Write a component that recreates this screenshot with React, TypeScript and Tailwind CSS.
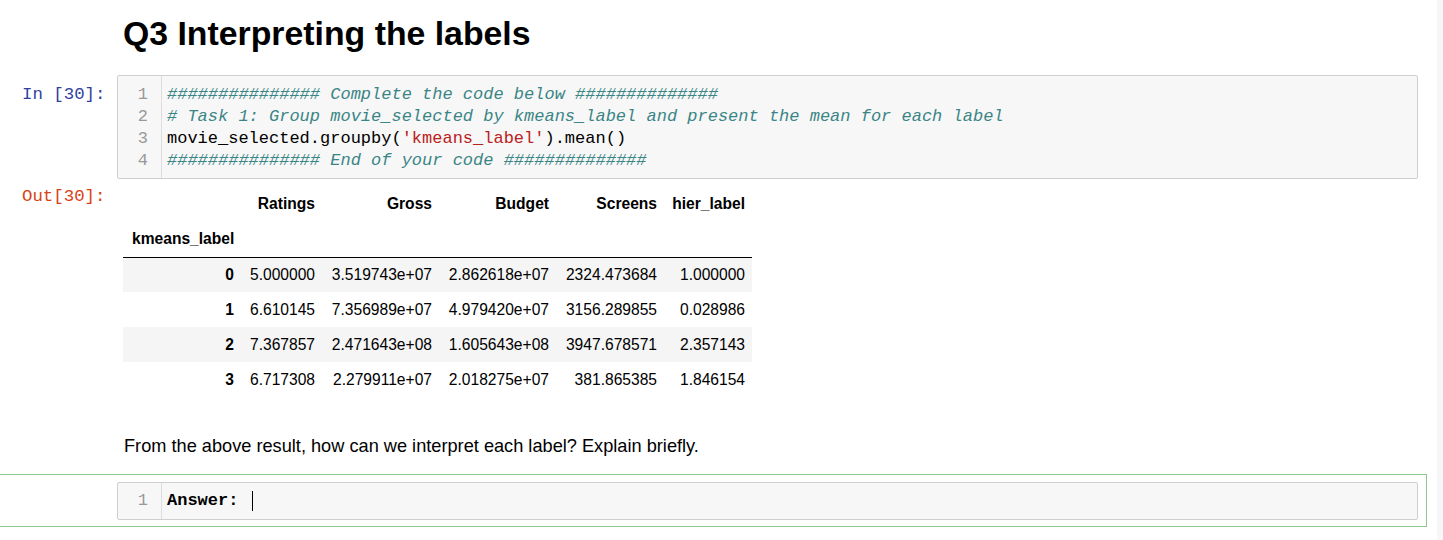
const mono = { fontFamily: '"Liberation Mono", "DejaVu Sans Mono", monospace' }

const rows = [
  { idx: '0', vals: ['5.000000', '3.519743e+07', '2.862618e+07', '2324.473684', '1.000000'] },
  { idx: '1', vals: ['6.610145', '7.356989e+07', '4.979420e+07', '3156.289855', '0.028986'] },
  { idx: '2', vals: ['7.367857', '2.471643e+08', '1.605643e+08', '3947.678571', '2.357143'] },
  { idx: '3', vals: ['6.717308', '2.279911e+07', '2.018275e+07', '381.865385', '1.846154'] },
]

const cols = ['Ratings', 'Gross', 'Budget', 'Screens', 'hier_label']
const widths = ['w-[81px]', 'w-[117px]', 'w-[117px]', 'w-[108px]', 'w-[88px]']

function Hashes({ n }: { n: number }) {
  return <>{'#'.repeat(n)}</>
}

function CodeCell() {
  const lines = [
    <span className="italic text-[#3a8585]"><Hashes n={15} /> Complete the code below <Hashes n={14} /></span>,
    <span className="italic text-[#3a8585]"># Task 1: Group movie_selected by kmeans_label and present the mean for each label</span>,
    <span className="text-black">movie_selected.groupby(<span className="text-[#ba2121]">'kmeans_label'</span>).mean()</span>,
    <span className="italic text-[#3a8585]"><Hashes n={15} /> End of your code <Hashes n={14} /></span>,
  ]
  return (
    <div className="flex" style={mono}>
      <div className="w-[117px] shrink-0 pl-[22px] pt-[9px] text-[17.4px] leading-[22px] text-[#303f9f]">In [30]:</div>
      <div className="w-[1301px] flex border border-[#cfcfcf] bg-[#f7f7f7] rounded-[2px] text-[17px] leading-[22px]">
        <div className="w-[44px] shrink-0 border-r border-[#dddddd] pt-[8px] pb-[6px] pr-[13px] text-right text-[#999999]">
          {lines.map((_, i) => <div key={i}>{i + 1}</div>)}
        </div>
        <div className="pl-[5px] pt-[8px] pb-[6px] whitespace-pre">
          {lines.map((l, i) => <div key={i}>{l}</div>)}
        </div>
      </div>
    </div>
  )
}

function OutputCell() {
  return (
    <div className="flex mt-[7px]">
      <div className="w-[117px] shrink-0 pl-[22px] text-[17.4px] leading-[22px] text-[#d84315]" style={mono}>Out[30]:</div>
      <div className="pl-[6px] pt-[1px] text-[15.6px] text-black">
        <table className="border-collapse">
          <thead>
            <tr className="h-[34px]">
              <th className="w-[118px]"></th>
              {cols.map((c, i) => (
                <th key={c} className={`${widths[i]} pr-[7px] text-right font-bold align-middle`}>{c}</th>
              ))}
            </tr>
            <tr className="h-[36px] border-b border-black">
              <th className="pl-[9px] text-left font-bold align-middle">kmeans_label</th>
              {cols.map(c => <th key={c}></th>)}
            </tr>
          </thead>
          <tbody>
            {rows.map((r, i) => (
              <tr key={r.idx} className={`h-[35px] ${i % 2 === 0 ? 'bg-[#f5f5f5]' : 'bg-white'}`}>
                <th className="pr-[7px] text-right font-bold align-middle">{r.idx}</th>
                {r.vals.map((v, j) => (
                  <td key={j} className="pr-[7px] text-right align-middle whitespace-nowrap">{v}</td>
                ))}
              </tr>
            ))}
          </tbody>
        </table>
      </div>
    </div>
  )
}

function AnswerCell() {
  return (
    <div className="mt-[15px] w-[1427px] border-t border-b border-r border-[#8cc890] pt-[7px] pb-[6px] pr-[8px] flex">
      <div className="w-[117px] shrink-0"></div>
      <div className="flex-1 flex border border-[#cfcfcf] bg-[#f7f7f7] rounded-[2px] text-[17px] leading-[22px]" style={mono}>
        <div className="w-[44px] shrink-0 border-r border-[#dddddd] py-[7px] pr-[13px] text-right text-[#999999]">1</div>
        <div className="pl-[5px] py-[7px] whitespace-pre flex items-center">
          <span className="font-bold text-black">Answer: </span>
          <span className="inline-block w-px h-[20px] bg-black ml-[3px]"></span>
        </div>
      </div>
    </div>
  )
}

export default function App() {
  return (
    <div className="flex w-full h-[540px] bg-white overflow-hidden" style={{ fontFamily: '"Liberation Sans", Arial, sans-serif' }}>
      <div className="w-[1437px] shrink-0 bg-white">
        <h2 className="pl-[123px] pt-[13px] text-[33.8px] leading-[40px] font-bold text-black">Q3 Interpreting the labels</h2>
        <div className="mt-[22px]">
          <CodeCell />
        </div>
        <OutputCell />
        <p className="mt-[36px] pl-[124px] text-[18.2px] leading-[26px] text-black">
          From the above result, how can we interpret each label? Explain briefly.
        </p>
        <AnswerCell />
      </div>
      <div className="flex-1 bg-[#f7f7f7]"></div>
    </div>
  )
}
